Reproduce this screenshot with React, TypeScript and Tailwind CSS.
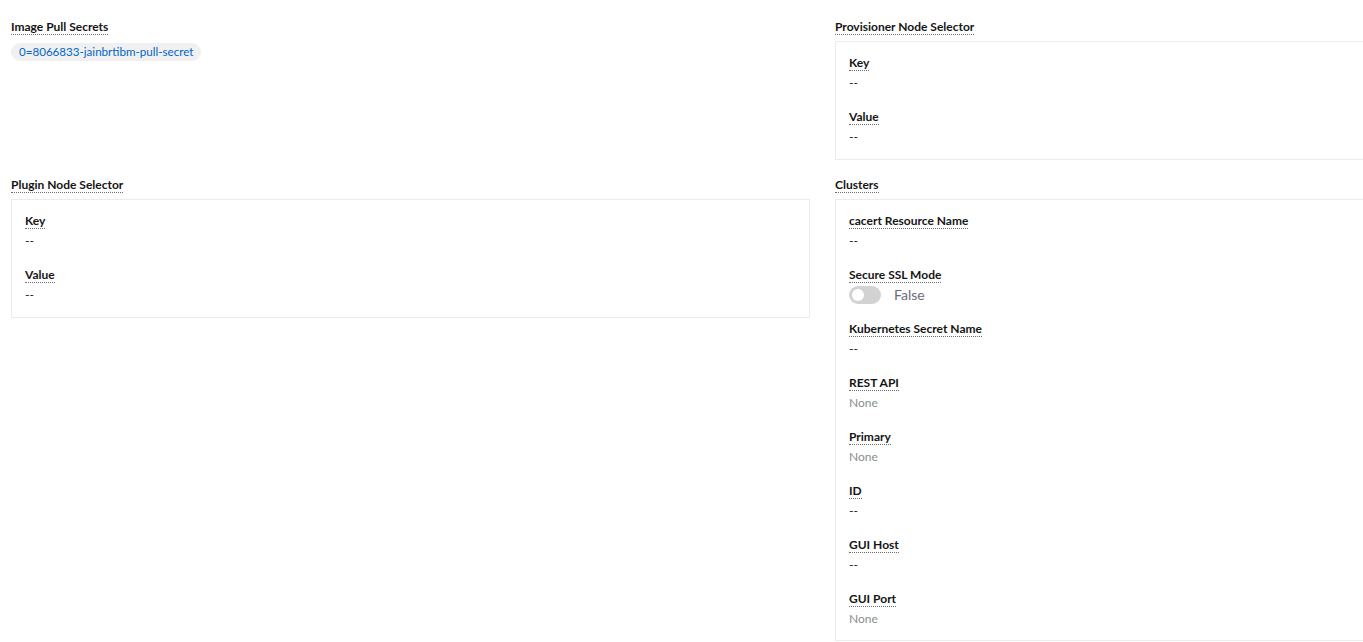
import React from 'react'

type Item = { label: string; kind?: 'dash' | 'none' | 'toggle' }

const font = { fontFamily: 'Lato, "Liberation Sans", sans-serif' }

function Term({ children, tall }: { children: React.ReactNode; tall?: boolean }) {
  return (
    <div className={tall ? 'h-[20px] leading-[16px]' : 'h-[18px] leading-[16px]'}>
      <span className="inline-block text-[12px] font-bold text-[#151515] border-b border-dotted border-[#6a6e73] leading-[15px]">
        {children}
      </span>
    </div>
  )
}

function Value({ item }: { item: Item }) {
  if (item.kind === 'toggle') {
    return (
      <div className="flex items-start gap-[13px] h-[20px] pt-[1px]">
        <div className="w-[32px] h-[18px] rounded-full bg-[#d2d2d2] flex items-center px-[3px]">
          <div className="w-[12px] h-[12px] rounded-full bg-white" />
        </div>
        <span className="text-[14px] leading-[18px] text-[#6a6e73]">False</span>
      </div>
    )
  }
  if (item.kind === 'none') {
    return <div className="h-[20px] leading-[20px] text-[12px] text-[#8a8d90]">None</div>
  }
  return <div className="h-[20px] leading-[20px] text-[12px] text-[#151515]">--</div>
}

function Box({ items, tight }: { items: Item[]; tight?: boolean }) {
  return (
    <div
      className={
        tight
          ? 'border border-[#ebebeb] px-[13px] pt-[11px] pb-[11px] flex flex-col gap-[14px]'
          : 'border border-[#ebebeb] px-[13px] pt-[11px] pb-[12px] flex flex-col gap-[14px]'
      }
    >
      {items.map((item) => (
        <div key={item.label}>
          <Term tall>{item.label}</Term>
          <Value item={item} />
        </div>
      ))}
    </div>
  )
}

function Section({ title, children }: { title: string; children: React.ReactNode }) {
  return (
    <div>
      <div className="mb-[6px]">
        <Term>{title}</Term>
      </div>
      {children}
    </div>
  )
}

const keyValue: Item[] = [
  { label: 'Key', kind: 'dash' },
  { label: 'Value', kind: 'dash' },
]

const clusters: Item[] = [
  { label: 'cacert Resource Name', kind: 'dash' },
  { label: 'Secure SSL Mode', kind: 'toggle' },
  { label: 'Kubernetes Secret Name', kind: 'dash' },
  { label: 'REST API', kind: 'none' },
  { label: 'Primary', kind: 'none' },
  { label: 'ID', kind: 'dash' },
  { label: 'GUI Host', kind: 'dash' },
  { label: 'GUI Port', kind: 'none' },
]

export default function App() {
  return (
    <div className="w-screen h-screen overflow-hidden bg-white" style={font}>
      <div className="w-[1623px] pl-[11px] pt-[17px] grid grid-cols-[799px_799px] gap-x-[25px] gap-y-[15px] items-start">
        <Section title="Image Pull Secrets">
          <div className="-mt-[3px]">
            <span className="inline-block rounded-full bg-[#f0f0f0] px-[8px] h-[18px] leading-[18px] text-[11.6px] text-[#0066cc]">
              0=8066833-jainbrtibm-pull-secret
            </span>
          </div>
        </Section>
        <Section title="Provisioner Node Selector">
          <Box items={keyValue} />
        </Section>
        <Section title="Plugin Node Selector">
          <Box items={keyValue} />
        </Section>
        <Section title="Clusters">
          <Box items={clusters} tight />
        </Section>
      </div>
    </div>
  )
}
